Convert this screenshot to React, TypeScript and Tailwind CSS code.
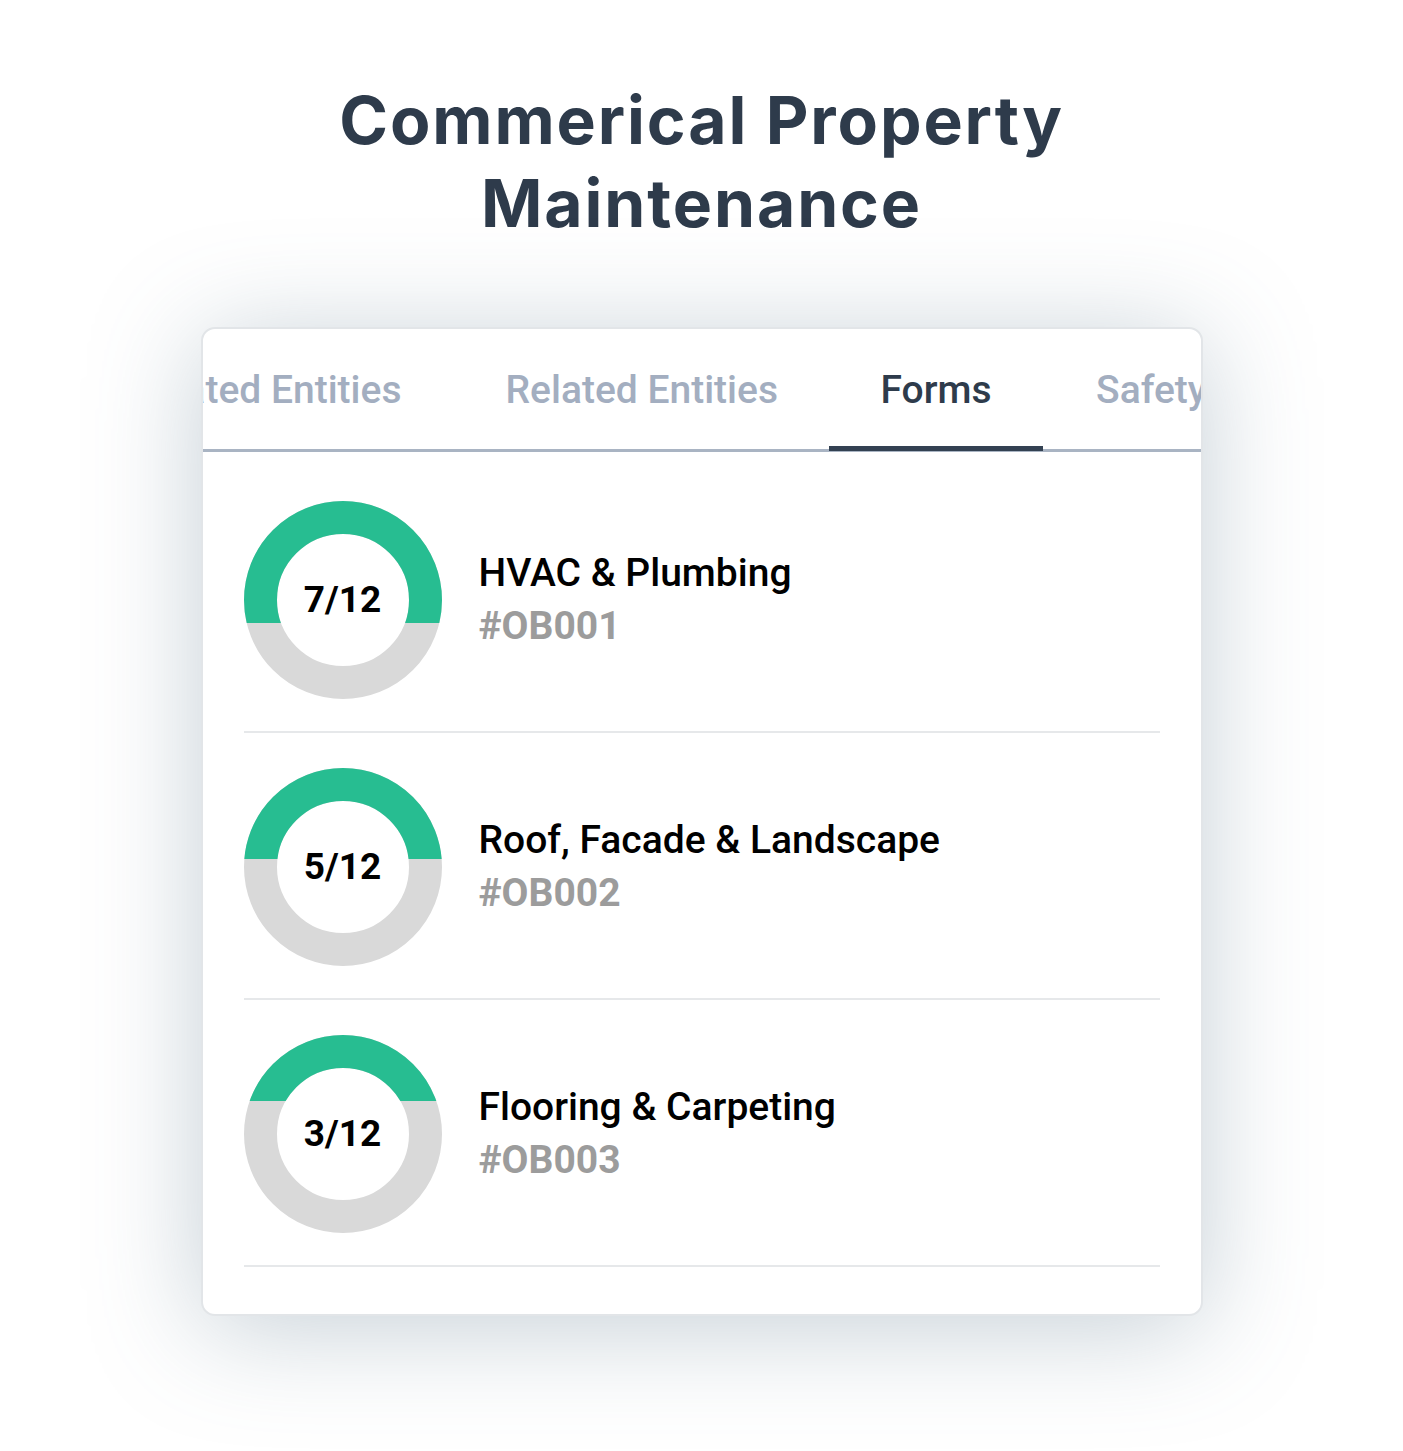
import React from "react";

const rows = [
  { label: "7/12", title: "HVAC & Plumbing", code: "#OB001", cut: 122 },
  { label: "5/12", title: "Roof, Facade & Landscape", code: "#OB002", cut: 91 },
  { label: "3/12", title: "Flooring & Carpeting", code: "#OB003", cut: 66 },
];

function Donut({ cut, id }: { cut: number; id: string }) {
  return (
    <svg width="198" height="198" viewBox="0 0 198 198" className="block shrink-0">
      <defs>
        <clipPath id={id}>
          <rect x="0" y="0" width="198" height={cut} />
        </clipPath>
      </defs>
      <circle cx="99" cy="99" r="82.5" fill="none" stroke="#d9d9d9" strokeWidth="33" />
      <circle cx="99" cy="99" r="82.5" fill="none" stroke="#27bd91" strokeWidth="33" clipPath={`url(#${id})`} />
    </svg>
  );
}

export default function App() {
  return (
    <div
      className="w-[1403px] h-[1451px] bg-white flex flex-col items-center overflow-hidden"
      style={{ fontFamily: "Roboto, 'Liberation Sans', sans-serif" }}
    >
      <h1
        className="mt-[79px] text-center text-[66px] leading-[83px] font-bold text-[#2e3b4b] tracking-[1.9px]"
        style={{ fontFamily: "Inter, 'Open Sans', sans-serif" }}
      >
        Commerical Property
        <br />
        Maintenance
      </h1>
      <div className="mt-[82px] w-[1002px] h-[989px] rounded-[14px] border-2 border-[#e2e5e8] bg-white shadow-[0_12px_110px_rgba(85,115,135,0.34)] overflow-hidden">
        <div className="relative flex h-[123px] items-stretch text-[39px] font-medium">
          <div className="absolute left-0 right-0 bottom-0 h-[3px] bg-[#a9b4c3]" />
          <div className="w-[252px] shrink-0 flex justify-end items-center pr-[53px] overflow-hidden whitespace-nowrap text-[#a3aec0]">
            Associated Entities
          </div>
          <div className="shrink-0 flex items-center px-[51px] whitespace-nowrap text-[#a3aec0]">
            Related Entities
          </div>
          <div className="relative shrink-0 w-[214px] flex items-center justify-center whitespace-nowrap text-[#2e3b4b]">
            Forms
            <div className="absolute left-0 right-0 bottom-[1px] h-[5px] bg-[#334152]" />
          </div>
          <div className="shrink-0 flex items-center pl-[53px] whitespace-nowrap text-[#a3aec0]">
            Safety
          </div>
        </div>
        <div className="px-[41px] pt-[49px]">
          {rows.map((r, i) => (
            <div key={i} className={`${i > 0 ? "pt-[35px]" : ""} border-b-2 border-[#e6e8ea]`}>
              <div className="flex items-center pb-[32px]">
                <div className="relative w-[198px] h-[198px] shrink-0">
                  <Donut cut={r.cut} id={`clip${i}`} />
                  <div className="absolute inset-0 flex items-center justify-center text-[37px] font-bold text-black">
                    {r.label}
                  </div>
                </div>
                <div className="ml-[37px] flex flex-col">
                  <div className="text-[39px] leading-[53px] font-medium text-black">{r.title}</div>
                  <div className="text-[39px] leading-[53px] font-bold text-[#9c9c9c]">{r.code}</div>
                </div>
              </div>
            </div>
          ))}
        </div>
      </div>
    </div>
  );
}
